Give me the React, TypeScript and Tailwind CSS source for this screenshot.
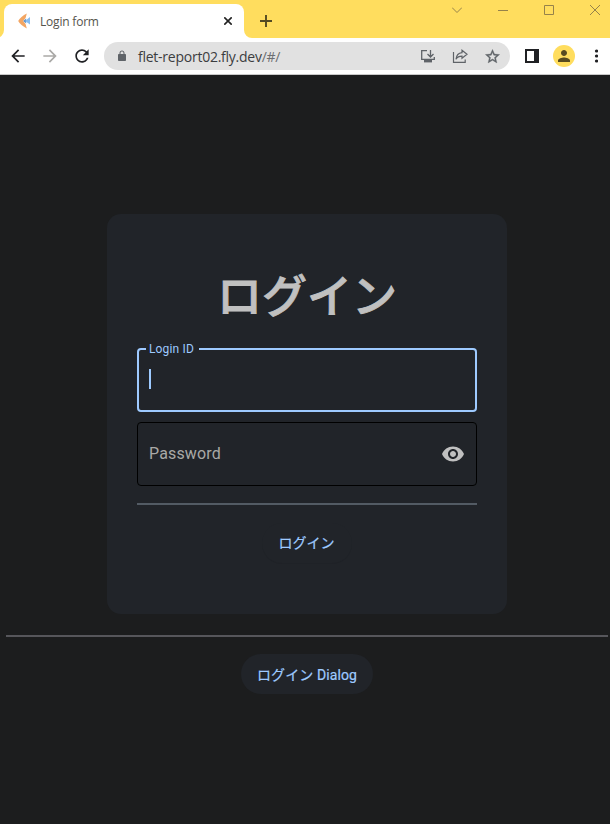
import { useState } from 'react'
import type { ReactNode } from 'react'

interface IconProps {
  className: string
  path: string
}

const icons = {
  back: 'M20 11H7.83l5.59-5.59L12 4l-8 8 8 8 1.41-1.41L7.83 13H20v-2z',
  forward: 'M12 4l-1.41 1.41L16.17 11H4v2h12.17l-5.58 5.59L12 20l8-8z',
  reload:
    'M17.65 6.35C16.2 4.9 14.21 4 12 4c-4.42 0-7.99 3.58-7.99 8s3.57 8 7.99 8c3.73 0 6.84-2.55 7.73-6h-2.08c-.82 2.33-3.04 4-5.65 4-3.31 0-6-2.69-6-6s2.69-6 6-6c1.66 0 3.14.69 4.22 1.78L13 11h7V4l-2.35 2.35z',
  lock: 'M18 8h-1V6c0-2.76-2.24-5-5-5S7 3.24 7 6v2H6c-1.1 0-2 .9-2 2v10c0 1.1.9 2 2 2h12c1.1 0 2-.9 2-2V10c0-1.1-.9-2-2-2zM9 6c0-1.66 1.34-3 3-3s3 1.34 3 3v2H9V6z',
  star: 'M22 9.24l-7.19-.62L12 2 9.19 8.63 2 9.24l5.46 4.73L5.82 21 12 17.27 18.18 21l-1.63-7.03L22 9.24zM12 15.4l-3.76 2.27 1-4.28-3.32-2.88 4.38-.38L12 6.1l1.71 4.04 4.38.38-3.32 2.88 1 4.28L12 15.4z',
  person:
    'M12 12c2.21 0 4-1.79 4-4s-1.79-4-4-4-4 1.79-4 4 1.79 4 4 4zm0 2c-2.67 0-8 1.34-8 4v2h16v-2c0-2.66-5.33-4-8-4z',
  eye: 'M12 4.5C7 4.5 2.73 7.61 1 12c1.73 4.39 6 7.5 11 7.5s9.27-3.11 11-7.5c-1.73-4.39-6-7.5-11-7.5zM12 17c-2.76 0-5-2.24-5-5s2.24-5 5-5 5 2.24 5 5-2.24 5-5 5zm0-8c-1.66 0-3 1.34-3 3s1.34 3 3 3 3-1.34 3-3-1.34-3-3-3z'
}

function Icon({ className, path }: IconProps) {
  return (
    <svg viewBox="0 0 24 24" fill="currentColor" className={className}>
      <path d={path} />
    </svg>
  )
}

function TitleBar() {
  return (
    <div className="flex h-[38px] bg-[#ffdd5e]">
      <div className="relative ml-1 mt-1 flex h-[34px] w-60 items-center rounded-t-lg bg-white pl-3.5">
        <svg viewBox="0 0 16 16" className="h-4 w-4">
          <path d="M8.8 0.6C5 2.5 1.5 5.5 0.2 8C1.5 10.5 5 13.5 8.8 15.4L7.6 11L5.2 8L7.6 5Z" fill="#f3a663" />
          <path d="M5.2 8L8.2 5.4V10.6Z" fill="#5b93cc" />
          <path d="M7 8L12 4V11.6Z" fill="#86bdf2" />
        </svg>
        <span className="ml-1.5 mt-0.5 text-[12px] tracking-[-0.2px] text-[#55544c]">Login form</span>
        <svg viewBox="0 0 8 8" className="ml-auto mr-3 h-2 w-2" stroke="#222" strokeWidth="1.6">
          <path d="M0.3 0.3L7.7 7.7M7.7 0.3L0.3 7.7" />
        </svg>
        <svg viewBox="0 0 8 8" className="absolute -right-2 bottom-0 h-2 w-2" fill="#fff">
          <path d="M0 0A8 8 0 0 0 8 8H0Z" />
        </svg>
        <svg viewBox="0 0 8 8" className="absolute -left-2 bottom-0 h-2 w-2" fill="#fff">
          <path d="M8 0A8 8 0 0 1 0 8H8Z" />
        </svg>
      </div>
      <svg viewBox="0 0 12 12" className="ml-4 mt-[15px] h-3 w-3" stroke="#544a22" strokeWidth="1.9">
        <path d="M6 0V12M0 6H12" />
      </svg>
      <div className="ml-auto mr-[10px] mt-1 flex h-3 items-center gap-9 text-[#96824a]">
        <svg viewBox="0 0 10 10" className="h-2.5 w-2.5" fill="none" stroke="currentColor">
          <path d="M0 2.5L5 7.5L10 2.5" />
        </svg>
        <svg viewBox="0 0 10 10" className="h-2.5 w-2.5" fill="none" stroke="currentColor">
          <path d="M0 5.5H10" />
        </svg>
        <svg viewBox="0 0 10 10" className="h-2.5 w-2.5" fill="none" stroke="currentColor">
          <path d="M0.5 0.5H9.5V9.5H0.5Z" />
        </svg>
        <svg viewBox="0 0 10 10" className="h-2.5 w-2.5" fill="none" stroke="currentColor">
          <path d="M0 0L10 10M10 0L0 10" />
        </svg>
      </div>
    </div>
  )
}

function Toolbar() {
  return (
    <div className="flex h-[37px] items-center border-b border-[#c9c9c9] bg-white pl-2">
      <Icon path={icons.back} className="h-5 w-5 text-[#202124]" />
      <Icon path={icons.forward} className="ml-3 h-5 w-5 text-[#aaa9a7]" />
      <Icon path={icons.reload} className="ml-3 h-5 w-5 text-[#202124]" />
      <div className="ml-3 flex h-7 w-[406px] items-center rounded-full bg-[#e1e1e1] pl-3 pr-[9px] text-[#5f6368]">
        <Icon path={icons.lock} className="h-3 w-3" />
        <span className="ml-2.5 text-[14px] tracking-[-0.25px] text-[#3c3d40]">
          flet-report02.fly.dev<span className="text-[#6c6e71]">/#/</span>
        </span>
        <div className="ml-auto flex items-center gap-4">
          <svg viewBox="0 0 16 16" className="h-4 w-4" fill="none" stroke="currentColor" strokeWidth="1.3">
            <path d="M7 2.7H1.7V11.3H14.3V9M10.5 2V8.5M7.5 6L10.5 9L13.5 6" />
            <path d="M4 13.2H12" strokeWidth="2.4" />
          </svg>
          <svg viewBox="0 0 16 16" className="h-4 w-4" fill="none" stroke="currentColor" strokeWidth="1.2">
            <path d="M1.5 4V14.3H13.2V11.5" />
            <path d="M10 2.3L15 6.3L10 10.3V8.2C7 8.2 5.2 9.2 4 11.2C4.4 7.5 6.5 5 10 4.6Z" />
          </svg>
          <Icon path={icons.star} className="h-[17px] w-[17px] stroke-current stroke-[0.5]" />
        </div>
      </div>
      <svg viewBox="0 0 14 14" className="ml-[15px] h-3.5 w-3.5">
        <path d="M0 0H14V14H0ZM2 2V12H9V2Z" fill="#202124" fillRule="evenodd" />
      </svg>
      <div className="ml-3.5 flex h-[22px] w-[22px] items-center justify-center rounded-full bg-[#ffdd5e]">
        <Icon path={icons.person} className="h-[18px] w-[18px] text-[#584b20]" />
      </div>
      <svg viewBox="0 0 4 14" className="ml-[19px] h-3.5 w-1" fill="#202124">
        <circle cx="2.5" cy="2" r="1.6" />
        <circle cx="2.5" cy="7" r="1.6" />
        <circle cx="2.5" cy="12" r="1.6" />
      </svg>
    </div>
  )
}

function PillButton({ className, children }: { className: string; children: ReactNode }) {
  return (
    <button
      className={`flex h-10 items-center justify-center whitespace-pre rounded-full bg-[#212429] text-[14px] text-[#9ecaff] [-webkit-text-stroke:0.2px_#9ecaff] ${className}`}
    >
      {children}
    </button>
  )
}

export default function App() {
  const [visible, setVisible] = useState(false)

  return (
    <div className="flex h-[824px] w-[610px] flex-col overflow-hidden bg-[#1c1d1e]">
      <header className="font-['Open_Sans','Noto_Sans',sans-serif]">
        <TitleBar />
        <Toolbar />
      </header>

      <main className="flex flex-col pl-1.5 pr-0.5 pt-[139px] font-['Roboto','Noto_Sans_CJK_JP',sans-serif]">
        <div className="mx-auto flex h-[400px] w-[400px] flex-col rounded-[14px] bg-[#212429] px-[30px] pt-[52px]">
          <h1 className="h-[64px] text-center text-[45px] font-medium leading-[64px] text-[#c0c0c0] [-webkit-text-stroke:0.9px_#c0c0c0]">
            ログイン
          </h1>

          <fieldset className="mt-3 h-[70px] rounded border-2 border-[#9ecaff] pl-2.5">
            <legend className="-ml-[3px] h-[14px] pl-[3px] pr-[5px] text-[12px] leading-[14px] tracking-[0.15px] text-[#9ecaff]">
              Login ID
            </legend>
            <div className="mt-[13px] h-5 w-0.5 bg-[#9ecaff]" />
          </fieldset>

          <div className="mt-2.5 flex h-16 items-center justify-between rounded border border-black pl-[11px] pr-[11px]">
            <input
              type={visible ? 'text' : 'password'}
              placeholder="Password"
              className="w-60 bg-transparent text-[16px] tracking-[0.15px] text-white outline-none placeholder:text-[#a9a9a6]"
            />
            <button onClick={() => setVisible(!visible)}>
              <Icon path={icons.eye} className="h-6 w-6 text-[#c0c0c0]" />
            </button>
          </div>

          <div className="mt-[17px] h-0.5 bg-[#535b64]" />
          <PillButton className="mx-auto mt-[18px] w-[90px] pr-px shadow-[0_1px_0_#1f2227]">ログイン</PillButton>
        </div>

        <div className="mt-[21px] h-0.5 bg-[#56565b]" />
        <PillButton className="mx-auto mt-[17px] w-[132px] pt-0.5 tracking-[0.1px]">ログイン Dialog</PillButton>
      </main>
    </div>
  )
}
